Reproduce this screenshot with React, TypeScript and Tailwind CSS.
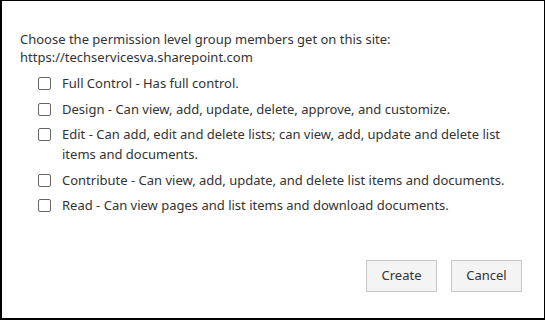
import React from 'react';

const options = [
  { name: 'Full Control', desc: 'Has full control.' },
  { name: 'Design', desc: 'Can view, add, update, delete, approve, and customize.' },
  { name: 'Edit', desc: 'Can add, edit and delete lists; can view, add, update and delete list', more: 'items and documents.' },
  { name: 'Contribute', desc: 'Can view, add, update, and delete list items and documents.' },
  { name: 'Read', desc: 'Can view pages and list items and download documents.' },
];

const App: React.FC = () => {
  return (
    <div className="w-[545px] h-[320px] bg-black pl-[2px] pt-px pr-px pb-[2px]">
      <div
        className="flex h-full flex-col bg-white pl-[18px] pr-[22px] pt-[29px] pb-[26px] text-[13px] text-[#333]"
        style={{ fontFamily: '"Noto Sans", "Open Sans", sans-serif' }}
      >
        <p className="leading-[18px]">
          Choose the permission level group members get on this site:
          <br />
          https://techservicesva.sharepoint.com
        </p>

        <ul className="mt-[7px] flex flex-col gap-[5.5px] pl-[18px]">
          {options.map((o) => (
            <li key={o.name} className="flex items-start gap-[11px] leading-[20px]">
              <span className="mt-[4px] h-[13px] w-[13px] shrink-0 rounded-[2px] border border-[#666] bg-white" />
              <span>
                {o.name} - {o.desc}
                {o.more && (
                  <>
                    <br />
                    {o.more}
                  </>
                )}
              </span>
            </li>
          ))}
        </ul>

        <div className="mt-auto flex justify-end gap-[14px]">
          <button className="h-[32px] w-[71px] border border-[#c6c6c6] bg-[#f4f4f4] text-[13px] text-[#333]">
            Create
          </button>
          <button className="h-[32px] w-[71px] border border-[#c6c6c6] bg-[#f4f4f4] text-[13px] text-[#333]">
            Cancel
          </button>
        </div>
      </div>
    </div>
  );
};

export default App;
